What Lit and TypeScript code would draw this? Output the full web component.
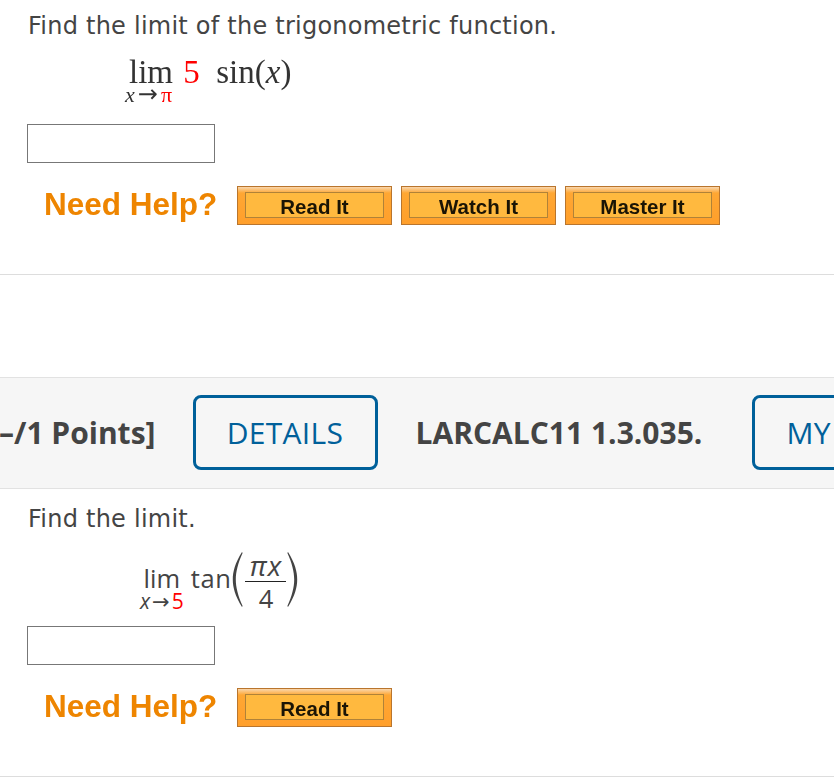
import { html, css, LitElement } from "lit";
import { customElement, property } from "lit/decorators.js";

/* help-button */

@customElement("help-button")
export class HelpButton extends LitElement {
  @property() label = "";

  static styles = css`
    :host {
      display: block;
    }
    .outer {
      box-sizing: border-box;
      width: 155px;
      height: 39px;
      padding: 5px 7px 6px;
      border: 1px solid #b9752d;
      background: linear-gradient(#f9d6ad 0, #ffa733 6px, #ff9f2b 100%);
    }
    .inner {
      box-sizing: border-box;
      height: 26px;
      padding-top: 1px;
      border: 1px solid #b08238;
      background: #ffb93f;
      color: #1a1405;
      font: bold 20.5px/25px "Liberation Sans", sans-serif;
      text-align: center;
      filter: blur(0.4px);
    }
  `;

  render() {
    return html`<div class="outer"><div class="inner">${this.label}</div></div>`;
  }
}

/* app-root */

@customElement("app-root")
export class AppRoot extends LitElement {
  static styles = css`
    :host {
      display: block;
      width: 834px;
      height: 779px;
      overflow: hidden;
      background: #fff;
      color: #444;
      font-family: "DejaVu Sans", sans-serif;
    }
    .question {
      box-sizing: border-box;
      padding-left: 27px;
      border-bottom: 1px solid #ddd;
    }
    .first {
      height: 275px;
      padding-top: 11px;
    }
    .second {
      height: 288px;
      padding-top: 15px;
    }
    .prompt {
      margin: 0 0 0 1px;
      font-size: 24px;
      line-height: 30px;
      letter-spacing: 0.24px;
    }
    .answer {
      display: block;
      box-sizing: border-box;
      width: 188px;
      height: 39px;
      border: 1px solid #777;
      background: #fff;
    }
    .help {
      display: flex;
      align-items: center;
      gap: 9px;
      margin-top: 23px;
    }
    .need {
      width: 201px;
      box-sizing: border-box;
      padding: 0 0 2px 17px;
      color: #ee8500;
      font: bold 31.5px/37px "Liberation Sans", sans-serif;
      white-space: nowrap;
      filter: blur(0.3px);
    }
    .red {
      color: #f00;
    }

    /* serif formula, first question */
    .tex {
      display: flex;
      align-items: flex-start;
      height: 74px;
      margin: 7px 0 2px 102px;
      font-family: "Liberation Serif", serif;
      color: #333;
      filter: blur(0.4px);
    }
    .tex .lim {
      display: flex;
      flex-direction: column;
      align-items: flex-start;
      width: 46px;
      font-size: 33px;
      line-height: 48px;
    }
    .tex .under {
      margin: -11px 0 0 -4px;
      font-size: 22px;
      line-height: 20px;
      white-space: nowrap;
    }
    .tex .arrow {
      margin: 0 3px;
      font-family: "DejaVu Sans", sans-serif;
      font-size: 24px;
      line-height: 18px;
    }
    .tex .rest {
      font-size: 33px;
      line-height: 48px;
      white-space: pre;
    }
    .tex i {
      font-style: italic;
    }

    /* sans formula, second question */
    .sans {
      display: flex;
      align-items: flex-start;
      height: 62px;
      margin: 18px 0 12px 113px;
      font-family: "Open Sans", sans-serif;
      font-size: 25.5px;
    }
    .sans .lim {
      display: flex;
      flex-direction: column;
      align-items: center;
      margin-top: 14px;
      line-height: 24px;
    }
    .sans .under {
      font-size: 21px;
      line-height: 22px;
      white-space: nowrap;
    }
    .sans .arrow {
      margin: 0 2px;
      font-family: "DejaVu Sans", sans-serif;
    }
    .sans .tan {
      margin: 14px 0 0 7px;
      line-height: 24px;
      letter-spacing: 0.6px;
    }
    .sans .paren {
      display: block;
      flex: none;
      width: 11px;
      height: 55px;
      margin-left: 1px;
    }
    .sans .paren.flip {
      transform: scaleX(-1);
      margin-left: 1px;
    }
    .frac {
      display: flex;
      flex-direction: column;
      align-items: center;
      width: 41px;
      margin-left: 2px;
      line-height: 29px;
    }
    .frac .top {
      box-sizing: border-box;
      width: 100%;
      height: 30px;
      line-height: 27px;
      text-align: center;
      font-size: 28px;
      letter-spacing: 1px;
      font-style: italic;
      border-bottom: 1px solid #222;
    }
    .frac .bottom {
      margin-top: 2px;
    }

    /* question header band */
    .band {
      display: flex;
      align-items: center;
      box-sizing: border-box;
      height: 112px;
      width: 900px;
      margin-top: 102px;
      margin-left: -1px;
      padding-bottom: 2px;
      background: #f6f6f6;
      border-top: 1px solid #e2e2e2;
      border-bottom: 1px solid #e2e2e2;
      font-family: "Open Sans", sans-serif;
      font-size: 30px;
      white-space: nowrap;
    }
    .points,
    .code {
      flex: none;
      font-weight: 700;
      color: #444;
    }
    .details {
      flex: none;
      box-sizing: border-box;
      height: 75px;
      border: 3px solid #00609a;
      border-radius: 8px;
      color: #00609a;
      line-height: 69px;
      letter-spacing: 0.3px;
      text-align: center;
    }
    .d1 {
      width: 185px;
      margin: 0 38px 0 37px;
    }
    .d2 {
      width: 150px;
      margin-left: 50px;
      text-align: left;
      padding-left: 31px;
    }
  `;

  paren(flip: boolean) {
    return html`<svg class="paren ${flip ? "flip" : ""}" viewBox="0 0 11 55">
      <path d="M10 0 C3 11 0.8 20 0.8 27.5 C0.8 35 3 44 10 55 L10.6 54 C6 44 3.8 35 3.8 27.5 C3.8 20 6 11 10.6 1 Z" fill="#444" />
    </svg>`;
  }

  render() {
    return html`
      <section class="question first">
        <p class="prompt">Find the limit of the trigonometric function.</p>
        <div class="tex">
          <div class="lim">
            <span>lim</span>
            <span class="under"><i>x</i><span class="arrow">→</span><span class="red">π</span></span>
          </div>
          <span class="rest"> <span class="red">5</span>  sin(<i>x</i>)</span>
        </div>
        <input class="answer" type="text" />
        <div class="help">
          <span class="need">Need Help?</span>
          <help-button label="Read It"></help-button>
          <help-button label="Watch It"></help-button>
          <help-button label="Master It"></help-button>
        </div>
      </section>

      <div class="band">
        <span class="points">–/1 Points]</span>
        <span class="details d1">DETAILS</span>
        <span class="code">LARCALC11 1.3.035.</span>
        <span class="details d2">MY</span>
      </div>

      <section class="question second">
        <p class="prompt">Find the limit.</p>
        <div class="sans">
          <div class="lim">
            <span>lim</span>
            <span class="under"><i>x</i><span class="arrow">→</span><span class="red">5</span></span>
          </div>
          <span class="tan">tan</span>
          ${this.paren(false)}
          <div class="frac">
            <span class="top">πx</span>
            <span class="bottom">4</span>
          </div>
          ${this.paren(true)}
        </div>
        <input class="answer" type="text" />
        <div class="help">
          <span class="need">Need Help?</span>
          <help-button label="Read It"></help-button>
        </div>
      </section>
    `;
  }
}
